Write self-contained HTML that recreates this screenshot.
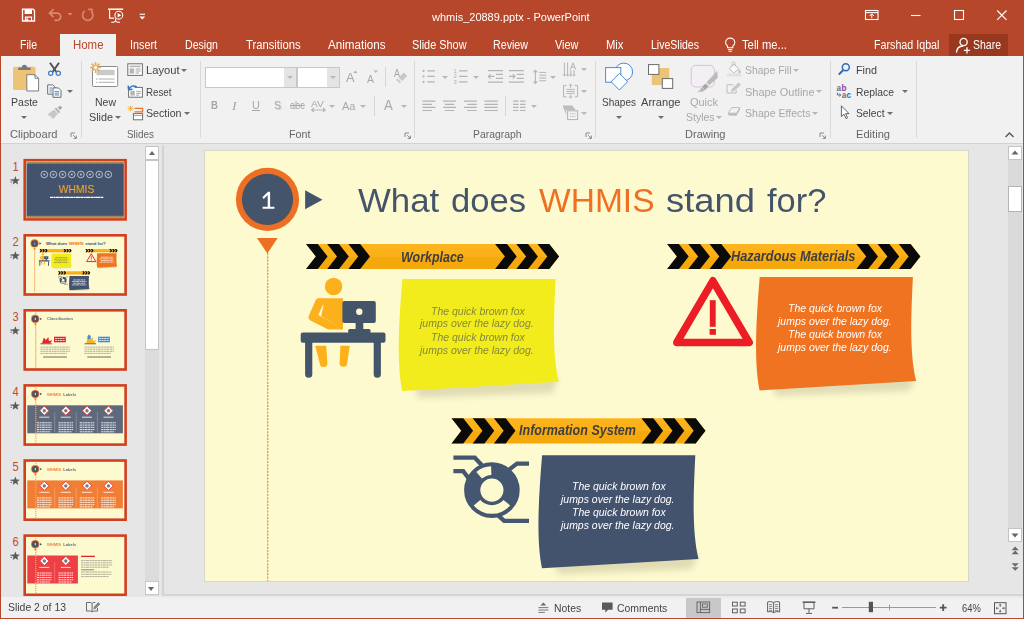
<!DOCTYPE html>
<html>
<head>
<meta charset="utf-8">
<title>whmis_20889.pptx - PowerPoint</title>
<style>
*{box-sizing:border-box;margin:0;padding:0}
html,body{width:1024px;height:619px;overflow:hidden;background:#e6e6e6;font-family:"Liberation Sans",sans-serif;}
#app{position:relative;width:1024px;height:619px;overflow:hidden;background:#e6e6e6;}
.abs{position:absolute}
svg{position:absolute;overflow:visible}
.t{position:absolute;white-space:nowrap;line-height:1}
#titlebar{left:0;top:0;width:1024px;height:56px;background:#b7472a}
#hometab{left:60px;top:34px;width:56px;height:23px;background:#f1f1f1}
#ribbon{left:1px;top:56px;width:1022px;height:88px;background:#f1f1f1;border-bottom:1px solid #d2d2d2}
.sep{position:absolute;top:61px;width:1px;height:77px;background:#dadada}
.ssep{position:absolute;width:1px;background:#d6d6d6}
.arr{position:absolute;width:0;height:0;border-left:3px solid transparent;border-right:3px solid transparent;border-top:3px solid #6e6e6e}
.arr.dis{border-top-color:#b8b8b8}
.arr.w{border-top-color:#fff}
#status{left:1px;top:597px;width:1022px;height:21px;background:#f1f1f1}
.frame{position:absolute;background:#b7472a}
</style>
</head>
<body>
<div id="app">
<div id="titlebar" class="abs"></div>
<div id="hometab" class="abs"></div>
<div id="ribbon" class="abs"></div>
<!-- QAT -->
<svg style="left:0;top:0" width="160" height="32" viewBox="0 0 160 32" fill="none">
 <!-- save -->
 <path d="M22.5 9.2h10.6l1.4 1.4v10.4h-12z" stroke="#fff" stroke-width="1.3"/>
 <rect x="24.6" y="9.2" width="7.4" height="4.8" fill="#fff"/>
 <path d="M25.5 21v-3.8h6v3.8" stroke="#fff" stroke-width="1.2"/>
 <rect x="26.4" y="18.4" width="1.8" height="2.6" fill="#fff"/>
 <!-- undo -->
 <g stroke="#d58c76" stroke-width="1.700">
  <path d="M49.5 13.2h7.2a4 3.6 0 0 1 0 7.2h-2.2"/>
  <path d="M53.6 9.2l-4.1 4 4.1 4"/>
 </g>
 <path d="M67.600 12.900h5l-2.500 2.700z" fill="#d58c76"/>
 <!-- redo -->
 <g stroke="#d3866f" stroke-width="1.700">
  <path d="M91.5 11.5a5.2 5.2 0 1 1 -6.8 -0.6"/>
  <path d="M88.2 9.3h3.7v3.9"/>
 </g>
 <!-- slideshow from beginning -->
 <g stroke="#fff" stroke-width="1.1">
  <path d="M108 9.2h15.2" stroke-width="1.5"/>
  <path d="M109.6 9.5v8.6h4.6"/>
  <circle cx="118.8" cy="15.2" r="3.9"/>
  <path d="M115.6 18.4v3.2M111.2 22.3h2.6l1.8-1.2 1.8 1.2h2.6"/>
 </g>
 <path d="M117.6 13l3.6 2.2-3.6 2.2z" fill="#fff"/>
 <!-- customize -->
 <rect x="139.6" y="13.7" width="5.4" height="1.1" fill="#fff"/>
 <path d="M139.4 16.4h5.8l-2.9 3.1z" fill="#fff"/>
</svg>
<!-- window controls -->
<svg style="left:860px;top:0" width="164" height="32" viewBox="860 0 164 32" fill="none" stroke="#fff" stroke-width="1.1">
 <rect x="865.5" y="10.5" width="12.5" height="9"/>
 <path d="M865.5 12.6h12.5"/>
 <path d="M871.8 18.2v-4.2M869.6 16l2.2-2.2 2.2 2.2" stroke-width="1"/>
 <path d="M911 15.5h9.5"/>
 <rect x="954.5" y="10.5" width="9" height="9"/>
 <path d="M997.2 10.5l9.3 9.3M1006.5 10.5l-9.3 9.3" stroke-width="1.15"/>
</svg>
<!-- share button + bulb -->
<div class="abs" style="left:949px;top:34px;width:59px;height:22px;background:#98391f"></div>
<svg style="left:720px;top:32px" width="304" height="24" viewBox="720 32 304 24" fill="none" stroke="#fff" stroke-width="1.1">
 <path d="M727.6 46.2c-1.7-1.4-2-2.6-2-3.7a4.6 4.4 0 0 1 9.2 0c0 1.1-.3 2.3-2 3.7v1.6h-5.2z"/>
 <path d="M728 49.6h4.4M728.6 51.3h3.2" stroke-width="1"/>
 <!-- person + -->
 <circle cx="963.6" cy="42" r="3.6" stroke-width="1.3"/>
 <path d="M956.4 52.6c.4-4.2 3.2-6.6 6.6-6.6" stroke-width="1.3"/>
 <path d="M967 47.2v6.2M963.9 50.3h6.2" stroke-width="1.3"/>
</svg>
<!-- ribbon separators -->
<div class="sep" style="left:81px"></div>
<div class="sep" style="left:200px"></div>
<div class="sep" style="left:414px"></div>
<div class="sep" style="left:595px"></div>
<div class="sep" style="left:830px"></div>
<div class="sep" style="left:916px"></div>
<div class="ssep" style="left:385px;top:67px;height:20px"></div>
<div class="ssep" style="left:374px;top:96px;height:20px"></div>
<div class="ssep" style="left:505px;top:96px;height:20px"></div>
<!-- font combos -->
<div class="abs" style="left:205px;top:67px;width:92px;height:21px;background:#fff;border:1px solid #c8c8c8"></div>
<div class="abs" style="left:284px;top:68px;width:12px;height:19px;background:#e4e4e4"></div>
<div class="abs" style="left:297px;top:67px;width:43px;height:21px;background:#fff;border:1px solid #c8c8c8"></div>
<div class="abs" style="left:327px;top:68px;width:12px;height:19px;background:#e4e4e4"></div>
<div class="arr dis" style="left:287px;top:76px"></div>
<div class="arr dis" style="left:330px;top:76px"></div>
<!-- dropdown arrows -->
<div class="arr" style="left:21px;top:115.5px"></div>
<div class="arr" style="left:67px;top:89.5px"></div>
<div class="arr" style="left:115px;top:115.5px"></div>
<div class="arr" style="left:181px;top:68.5px"></div>
<div class="arr" style="left:184px;top:111.5px"></div>
<div class="arr dis" style="left:329px;top:105px"></div>
<div class="arr dis" style="left:359.5px;top:105px"></div>
<div class="arr dis" style="left:401px;top:105px"></div>
<div class="arr dis" style="left:441.5px;top:76px"></div>
<div class="arr dis" style="left:473px;top:76px"></div>
<div class="arr dis" style="left:550px;top:76px"></div>
<div class="arr dis" style="left:531px;top:105px"></div>
<div class="arr dis" style="left:581px;top:68px"></div>
<div class="arr dis" style="left:581px;top:90px"></div>
<div class="arr dis" style="left:581px;top:112px"></div>
<div class="arr" style="left:616px;top:115.5px"></div>
<div class="arr" style="left:658px;top:115.5px"></div>
<div class="arr dis" style="left:716px;top:115.5px"></div>
<div class="arr dis" style="left:793px;top:68.5px"></div>
<div class="arr dis" style="left:816px;top:90px"></div>
<div class="arr dis" style="left:812px;top:111.5px"></div>
<div class="arr" style="left:902px;top:90px"></div>
<div class="arr" style="left:886.5px;top:111.5px"></div>
<!-- dialog launchers + collapse -->
<svg style="left:0;top:56px" width="1024" height="88" viewBox="0 56 1024 88" fill="none" stroke="#8a8a8a" stroke-width="1">
 <g id="dl"><path d="M71 137v-4h4"/><path d="M73.2 135.2l3 3M76.4 135.6v2.8h-2.8"/></g>
 <use href="#dl" x="334"/><use href="#dl" x="515"/><use href="#dl" x="749"/>
 <path d="M1005.5 137l4-4 4 4" stroke="#555" stroke-width="1.4"/>
</svg>
<!-- clipboard + slides icons -->
<svg style="left:0;top:56px" width="210" height="88" viewBox="0 56 210 88" fill="none">
 <!-- paste -->
 <rect x="13" y="66.7" width="22.5" height="23.2" rx="1.5" fill="#edc375"/>
 <path d="M18.2 70v-2.6h3.6a2.6 2.6 0 0 1 5.2 0h3.6v2.6z" fill="#7a7a7a"/>
 <path d="M26.8 74.7h8.2l3.6 3.6v12.7h-11.8z" fill="#fff" stroke="#7d7d7d" stroke-width="1"/>
 <path d="M35 74.7v3.6h3.6" stroke="#7d7d7d" stroke-width="1"/>
 <!-- cut -->
 <path d="M50 62.8l6.6 9.4M59 62.8l-6.6 9.4" stroke="#505050" stroke-width="1.900"/>
 <circle cx="50.7" cy="73.3" r="2.1" stroke="#3b7cc2" stroke-width="1.2"/>
 <circle cx="58.3" cy="73.3" r="2.1" stroke="#3b7cc2" stroke-width="1.2"/>
 <!-- copy -->
 <path d="M47.7 84.9h5l2.3 2.3v7h-7.3z" fill="#fff" stroke="#6a6a6a" stroke-width="1"/>
 <path d="M53 87.9h5.4l2.6 2.6v6.8h-8z" fill="#fff" stroke="#6a6a6a" stroke-width="1"/>
 <path d="M49.4 88h3M49.4 90h2.4M49.4 92h2.4M54.6 91.4h4.6M54.6 93.2h4.6M54.6 95h4.6" stroke="#3b7cc2" stroke-width="0.9"/>
 <!-- format painter (disabled) -->
 <path d="M47.6 114.4l6.4-5 4 4.4-5 5.2-2-2.3z" fill="#c9c6c9"/>
 <path d="M54.6 108.6l1.6-1.2 4 4.5-1.6 1.3z" fill="#b4b0b4"/>
 <path d="M57.6 107.4l3-1.6 1.6 1.8-2 2.4z" fill="#a7a3a7"/>
 <!-- new slide -->
 <rect x="92.5" y="66.5" width="25.2" height="20" rx="1" fill="#fff" stroke="#8b8b8b" stroke-width="1"/>
 <rect x="96.6" y="69.8" width="18" height="5.4" fill="#c9c9c9"/>
 <path d="M98.8 79h15.8M98.8 82.3h15.8" stroke="#9a9a9a" stroke-width="0.8"/>
 <path d="M96.2 79h1.2M96.2 82.3h1.2" stroke="#8a8a8a" stroke-width="0.9"/>
 <g stroke="#efb245" stroke-width="1.6"><path d="M95.6 62v11M90.1 67.5h11M91.7 63.6l7.8 7.8M99.5 63.6l-7.8 7.8"/></g>
 <circle cx="95.6" cy="67.5" r="1.7" fill="#f1f1f1"/>
 <!-- layout -->
 <rect x="127.8" y="63.8" width="14.6" height="11.6" fill="#fff" stroke="#6f6f6f" stroke-width="1"/>
 <rect x="129.6" y="65.6" width="11" height="1.6" fill="#b5b5b5"/>
 <rect x="129.6" y="68.4" width="4.6" height="5.2" fill="#b5b5b5"/>
 <path d="M135.6 69h5M135.6 71h5M135.6 73h3.4" stroke="#8d8d8d" stroke-width="0.8"/>
 <!-- reset -->
 <rect x="128.6" y="87.4" width="13.8" height="9.8" fill="#fff" stroke="#6f6f6f" stroke-width="1"/>
 <rect x="130.4" y="90.8" width="4.4" height="4.8" fill="#b5b5b5"/>
 <path d="M136.2 91.4h4.6M136.2 93.4h4.6M136.2 95.2h3" stroke="#8d8d8d" stroke-width="0.8"/>
 <rect x="126.6" y="84" width="8" height="5.2" fill="#f1f1f1"/>
 <path d="M128.6 89.8l-.4-4.2M128.4 89.8l4-.6M128.8 89.3c1.5-3.4 5-4.3 8-2.2" stroke="#2f75bf" stroke-width="1.5"/>
 <!-- section -->
 <rect x="133.4" y="113.6" width="9.2" height="6.2" fill="#fff" stroke="#6f6f6f" stroke-width="1"/>
 <path d="M133.4 115.6h9.2" stroke="#8d8d8d" stroke-width="0.8"/>
 <path d="M134.6 108.4h8v3.4h-8" stroke="#e8762d" stroke-width="1.3"/>
 <g stroke="#efb245" stroke-width="0.9"><path d="M130.6 105.4v6M127.6 108.4h6M128.5 106.3l4.2 4.2M132.7 106.3l-4.2 4.2"/></g>
</svg>
<!-- font + paragraph icons (disabled) -->
<svg style="left:200px;top:56px" width="400" height="88" viewBox="200 56 400 88" fill="none" stroke="#b4b4b4" stroke-width="1.2">
 <!-- grow/shrink triangles -->
 <path d="M353.2 73l2.2-2.6 2.2 2.6z" fill="#b4b4b4" stroke="none"/>
 <path d="M373.6 70.5h4.4l-2.2 2.6z" fill="#b4b4b4" stroke="none"/>
 <!-- clear formatting eraser -->
 <path d="M398.8 77.4l4.900-4.900 3.500 3.500-4.900 4.900z" fill="#c8c8c8" stroke="none"/>
 <path d="M397.500 78.500l3.500 3.500-1.300 1.300-3.500-3.500z" fill="#c8c8c8" stroke="none"/>
 <!-- AV double arrow -->
 <path d="M311.6 110h13.6M313.8 108l-2.2 2 2.2 2M323 108l2.2 2-2.2 2" stroke-width="1.1"/>
 <!-- bullets -->
 <path d="M427.2 70.9h7.6M427.2 76.4h7.6M427.2 81.9h7.6"/>
 <g fill="#b4b4b4" stroke="none"><circle cx="423.5" cy="70.9" r="1.1"/><circle cx="423.5" cy="76.4" r="1.1"/><circle cx="423.5" cy="81.9" r="1.1"/></g>
 <!-- numbering -->
 <path d="M459.2 70.9h8.2M459.2 76.4h8.2M459.2 81.9h8.2"/>
 <g font-family="Liberation Sans" font-size="5.2" fill="#aaa" stroke="none"><text x="453.8" y="72.6">1</text><text x="453.8" y="78.2">2</text><text x="453.8" y="83.8">3</text></g>
 <!-- decrease indent -->
 <path d="M488 70.6h15M488 82.2h15M496 74.4h7M496 78.4h7"/>
 <path d="M488.4 76.4h6M490.6 74.2l-2.2 2.2 2.2 2.2" stroke-width="1.1"/>
 <!-- increase indent -->
 <path d="M508.8 70.6h15M508.8 82.2h15M516.8 74.4h7M516.8 78.4h7"/>
 <path d="M509 76.4h6M512.8 74.2l2.2 2.2-2.2 2.2" stroke-width="1.1"/>
 <!-- line spacing -->
 <path d="M539.2 72.4h7M539.2 75.2h7M539.2 78h7M539.2 80.8h7" stroke-width="1"/>
 <path d="M535.4 70.4v13M533.4 72.4l2-2 2 2M533.4 81.4l2 2 2-2" stroke-width="1.1"/>
 <!-- text direction -->
 <path d="M564.4 62.6v13.4M567.6 62.6v13.4M570.8 70v6M574 70v6" stroke-width="1"/>
 <path d="M563 74.4l1.4 1.8 1.4-1.8M566.2 74.4l1.4 1.8 1.4-1.8M569.4 74.4l1.4 1.8 1.4-1.8M572.6 74.4l1.4 1.8 1.4-1.8" stroke-width="0.8"/>
 <path d="M570.4 69.4l2.6-6.6 2.6 6.6M571.3 67.2h3.4" stroke-width="1"/>
 <!-- align text -->
 <path d="M566.4 85.4h-2.8v11.4h2.8M574.8 85.4h2.8v11.4h-2.8" stroke="#b9adb9" stroke-width="1"/>
 <path d="M566.4 89.4h8.4M566.4 91.4h8.4M566.4 93.4h8.4" stroke-width="0.9"/>
 <path d="M570.6 84v4M569 85.8l1.6-1.8 1.6 1.8M570.6 98v-3.6M569 96.4l1.6 1.8 1.6-1.8" stroke-width="0.9"/>
 <!-- smartart -->
 <path d="M562.6 105.4h9.6l3.4 4.6h-9.4v5z" fill="#bdbdbd" stroke="none"/>
 <rect x="567.6" y="110.8" width="10" height="8.8" fill="#f6f0f6" stroke="#b9adb9" stroke-width="1"/>
 <path d="M570 113.6h5.4M570 116.4h5.4" stroke-width="0.9" stroke-dasharray="1.4 0.8"/>
 <!-- align left/center/right/justify -->
 <path d="M422.4 101.2h13M422.4 104.3h9.6M422.4 107.4h13M422.4 110.5h9.6"/>
 <path d="M443 101.2h13M444.8 104.3h9.4M443 107.4h13M444.8 110.5h9.4"/>
 <path d="M463.8 101.2h13M467.2 104.3h9.6M463.8 107.4h13M467.2 110.5h9.6"/>
 <path d="M484.4 101.2h13.4M484.4 104.3h13.4M484.4 107.4h13.4M484.4 110.5h13.4"/>
 <!-- columns -->
 <path d="M513 101.2h5.6M520 101.2h5.6M513 104.3h5.6M520 104.3h5.6M513 107.4h5.6M520 107.4h5.6M513 110.5h5.6M520 110.5h5.6"/>
</svg>
<!-- drawing + editing icons -->
<svg style="left:596px;top:56px" width="330" height="88" viewBox="596 56 330 88" fill="none">
 <!-- shapes -->
 <circle cx="623.8" cy="71.9" r="8.8" fill="#fff" stroke="#4a8ad0" stroke-width="1"/>
 <rect x="605.6" y="67.6" width="15.2" height="14.6" fill="#fff" stroke="#4a8ad0" stroke-width="1"/>
 <path d="M619.4 73.4l8.2 8.3-8.2 8.3-8.2-8.3z" fill="#fff" stroke="#4a8ad0" stroke-width="1"/>
 <!-- arrange -->
 <rect x="651.8" y="68" width="17.4" height="17" fill="#edc375"/>
 <rect x="648.5" y="64.6" width="10.4" height="9.8" fill="#fff" stroke="#6b6b6b" stroke-width="1"/>
 <rect x="662.3" y="78.6" width="10.4" height="9.8" fill="#fff" stroke="#6b6b6b" stroke-width="1"/>
 <!-- quick styles -->
 <rect x="691.2" y="65.4" width="23.2" height="21.6" rx="4.5" fill="#f4eff4" stroke="#cfc8cf" stroke-width="1"/>
 <path d="M697.2 91.6c2.2-.4 3.2-1.8 3.8-3.8l4.6 1.2c-1.4 2.4-4.2 3.4-8.4 2.6z" fill="#b9b6b9"/>
 <path d="M702 87l3.4-3.6 3 2.6-2.6 3.8z" fill="#a9a6a9"/>
 <path d="M706.4 82.4l10.8-11.6.6 7-8.6 7.4z" fill="#bdbabd"/>
 <!-- shape fill -->
 <path d="M729 68.6l5-4.4 4.8 4.6-5 4.2z" fill="#fbfbfb" stroke="#bdbdbd" stroke-width="1"/>
 <path d="M732 66.6v-3.2a1.5 1.5 0 0 1 3 0v2.6" stroke="#bdbdbd" stroke-width="0.9"/>
 <path d="M739.4 69.2c.9 1.2 1.5 2.1 1.5 2.8a1.4 1.3 0 0 1-2.8 0c0-.7.5-1.6 1.300-2.8z" fill="#c4c4c4"/>
 <rect x="727" y="73.6" width="14.2" height="2.8" fill="#e4dfe4"/>
 <!-- shape outline -->
 <path d="M733.4 84.8h-6.400v8.200h9.200v-3" stroke="#bdbdbd" stroke-width="1"/>
 <path d="M731.6 91.400l.8-2.600 6.200-5.800 1.800 1.800-6.200 5.800z" fill="#c9c9c9" stroke="#b5b5b5" stroke-width="0.6"/>
 <!-- shape effects -->
 <path d="M728.200 113.200l3.600-5.600h8l-3.200 5.600z" fill="#f5f1f5" stroke="#c2bcc2" stroke-width="1"/>
 <path d="M728.200 113.400v1.800l8.200.6 3.600-6.400v-1.600l-3.400 5.800z" fill="#b9b6b9"/>
 <!-- find -->
 <circle cx="845.8" cy="67.2" r="3.500" stroke="#2b6cb8" stroke-width="1.5"/>
 <path d="M843.200 70l-4.400 4.600" stroke="#2b6cb8" stroke-width="2"/>
 <!-- replace -->
 <g font-family="Liberation Sans" font-size="8.2" font-weight="bold">
  <text x="836.6" y="91.400" fill="#6e6e6e">a</text><text x="841.400" y="91.400" fill="#8c3fa8">b</text>
  <text x="841.800" y="97.600" fill="#6e6e6e">a</text><text x="846.600" y="97.600" fill="#2b6cb8">c</text>
 </g>
 <path d="M837.400 92.600v2.400h3.200M839.200 93.600l1.600 1.400-1.600 1.400" stroke="#2b6cb8" stroke-width="0.9"/>
 <!-- select -->
 <path d="M841.400 105.800v10.800l2.600-2.400 2 4.400 1.600-.8-2-4.200h3.400z" fill="#fff" stroke="#555" stroke-width="0.9"/>
</svg>
<!-- thumbnail panel -->
<svg style="left:0;top:144px" width="165" height="453" viewBox="0 144 165 453" fill="none">
<defs><clipPath id="pc"><rect x="0" y="144" width="165" height="452.6"/></clipPath></defs><g clip-path="url(#pc)">
<text x="12.6" y="170.7" font-family="Liberation Sans" font-size="13.5" fill="#c9472a" textLength="6.2" lengthAdjust="spacingAndGlyphs">1</text>
<path d="M15.40 176.10L16.56 179.20L19.87 179.35L17.28 181.41L18.16 184.60L15.40 182.77L12.64 184.60L13.52 181.41L10.93 179.35L14.24 179.20z" fill="#5a5a5a"/>
<path d="M10.2 179.8l2 .5M10.4 182.2l1.8-.3" stroke="#5a5a5a" stroke-width="0.8"/>
<rect x="23.4" y="158.9" width="103.5" height="61.8" fill="#d0401c"/>
<rect x="26.0" y="161.5" width="98.3" height="56.599999999999994" fill="#fdf3e6"/>
<text x="12.6" y="245.8" font-family="Liberation Sans" font-size="13.5" fill="#c9472a" textLength="6.2" lengthAdjust="spacingAndGlyphs">2</text>
<path d="M15.40 251.20L16.56 254.30L19.87 254.45L17.28 256.51L18.16 259.70L15.40 257.87L12.64 259.70L13.52 256.51L10.93 254.45L14.24 254.30z" fill="#5a5a5a"/>
<path d="M10.2 254.9l2 .5M10.4 257.3l1.8-.3" stroke="#5a5a5a" stroke-width="0.8"/>
<rect x="23.4" y="234.0" width="103.5" height="61.8" fill="#d0401c"/>
<rect x="26.0" y="236.6" width="98.3" height="56.599999999999994" fill="#fdf3e6"/>
<text x="12.6" y="320.8" font-family="Liberation Sans" font-size="13.5" fill="#c9472a" textLength="6.2" lengthAdjust="spacingAndGlyphs">3</text>
<path d="M15.40 326.20L16.56 329.30L19.87 329.45L17.28 331.51L18.16 334.70L15.40 332.87L12.64 334.70L13.52 331.51L10.93 329.45L14.24 329.30z" fill="#5a5a5a"/>
<path d="M10.2 329.9l2 .5M10.4 332.3l1.8-.3" stroke="#5a5a5a" stroke-width="0.8"/>
<rect x="23.4" y="309.0" width="103.5" height="61.8" fill="#d0401c"/>
<rect x="26.0" y="311.6" width="98.3" height="56.599999999999994" fill="#fdf3e6"/>
<text x="12.6" y="395.9" font-family="Liberation Sans" font-size="13.5" fill="#c9472a" textLength="6.2" lengthAdjust="spacingAndGlyphs">4</text>
<path d="M15.40 401.30L16.56 404.40L19.87 404.55L17.28 406.61L18.16 409.80L15.40 407.97L12.64 409.80L13.52 406.61L10.93 404.55L14.24 404.40z" fill="#5a5a5a"/>
<path d="M10.2 405.0l2 .5M10.4 407.4l1.8-.3" stroke="#5a5a5a" stroke-width="0.8"/>
<rect x="23.4" y="384.1" width="103.5" height="61.8" fill="#d0401c"/>
<rect x="26.0" y="386.70000000000005" width="98.3" height="56.599999999999994" fill="#fdf3e6"/>
<text x="12.6" y="471.0" font-family="Liberation Sans" font-size="13.5" fill="#c9472a" textLength="6.2" lengthAdjust="spacingAndGlyphs">5</text>
<path d="M15.40 476.40L16.56 479.50L19.87 479.65L17.28 481.71L18.16 484.90L15.40 483.07L12.64 484.90L13.52 481.71L10.93 479.65L14.24 479.50z" fill="#5a5a5a"/>
<path d="M10.2 480.1l2 .5M10.4 482.5l1.8-.3" stroke="#5a5a5a" stroke-width="0.8"/>
<rect x="23.4" y="459.2" width="103.5" height="61.8" fill="#d0401c"/>
<rect x="26.0" y="461.8" width="98.3" height="56.599999999999994" fill="#fdf3e6"/>
<text x="12.6" y="546.1" font-family="Liberation Sans" font-size="13.5" fill="#c9472a" textLength="6.2" lengthAdjust="spacingAndGlyphs">6</text>
<path d="M15.40 551.50L16.56 554.60L19.87 554.75L17.28 556.81L18.16 560.00L15.40 558.17L12.64 560.00L13.52 556.81L10.93 554.75L14.24 554.60z" fill="#5a5a5a"/>
<path d="M10.2 555.2l2 .5M10.4 557.6l1.8-.3" stroke="#5a5a5a" stroke-width="0.8"/>
<rect x="23.4" y="534.3" width="103.5" height="61.8" fill="#d0401c"/>
<rect x="26.0" y="536.9" width="98.3" height="56.599999999999994" fill="#fdf3e6"/>
<rect x="26.5" y="162.0" width="97.3" height="55.599999999999994" fill="#43526d"/>
<path d="M26.5 162.9h97.3M26.5 216.7h97.3" stroke="#e2b02a" stroke-width="1.7" stroke-dasharray="1.2 0.8"/>
<circle cx="44.3" cy="174.5" r="3.3" stroke="#e9ecf0" stroke-width="0.7"/><circle cx="44.3" cy="174.5" r="1.1" fill="#d5dae2" opacity="0.8"/>
<circle cx="53.4" cy="174.5" r="3.3" stroke="#e9ecf0" stroke-width="0.7"/><circle cx="53.4" cy="174.5" r="1.1" fill="#d5dae2" opacity="0.8"/>
<circle cx="62.6" cy="174.5" r="3.3" stroke="#e9ecf0" stroke-width="0.7"/><circle cx="62.6" cy="174.5" r="1.1" fill="#d5dae2" opacity="0.8"/>
<circle cx="71.8" cy="174.5" r="3.3" stroke="#e9ecf0" stroke-width="0.7"/><circle cx="71.8" cy="174.5" r="1.1" fill="#d5dae2" opacity="0.8"/>
<circle cx="80.9" cy="174.5" r="3.3" stroke="#e9ecf0" stroke-width="0.7"/><circle cx="80.9" cy="174.5" r="1.1" fill="#d5dae2" opacity="0.8"/>
<circle cx="90.0" cy="174.5" r="3.3" stroke="#e9ecf0" stroke-width="0.7"/><circle cx="90.0" cy="174.5" r="1.1" fill="#d5dae2" opacity="0.8"/>
<circle cx="99.2" cy="174.5" r="3.3" stroke="#e9ecf0" stroke-width="0.7"/><circle cx="99.2" cy="174.5" r="1.1" fill="#d5dae2" opacity="0.8"/>
<circle cx="108.3" cy="174.5" r="3.3" stroke="#e9ecf0" stroke-width="0.7"/><circle cx="108.3" cy="174.5" r="1.1" fill="#d5dae2" opacity="0.8"/>
<text x="58.5" y="193.2" font-family="Liberation Sans" font-size="11" fill="#f4a62a" textLength="35.6" lengthAdjust="spacingAndGlyphs">WHMIS</text>
<path d="M50.0 197.4h53.3" stroke="#fff" stroke-width="1.3" stroke-dasharray="3 0.4 2 0.3 4 0.4"/>
<rect x="26.5" y="237.1" width="97.3" height="55.599999999999994" fill="#fefad0"/>
<path d="M34.65 250.29999999999998V292.7" stroke="#f3a566" stroke-width="1" stroke-dasharray="1.3 0.7"/>
<g transform="translate(26.5 237.1) scale(0.12719) translate(-204 -150)"><use href="#sc"/>
<g font-family="Liberation Sans" font-size="33" font-weight="bold"><text x="358" y="212" fill="#44546a" textLength="168" lengthAdjust="spacingAndGlyphs">What does</text><text x="538" y="212" fill="#ee7023" textLength="116" lengthAdjust="spacingAndGlyphs">WHMIS</text><text x="666" y="212" fill="#44546a" textLength="160" lengthAdjust="spacingAndGlyphs">stand for?</text></g>
<path d="M431 311H524" stroke="#8b9040" stroke-width="5.5" stroke-dasharray="22 4 30 4 16 4"/>
<path d="M420 324H533" stroke="#8b9040" stroke-width="5.5" stroke-dasharray="22 4 30 4 16 4"/>
<path d="M431 337H524" stroke="#8b9040" stroke-width="5.5" stroke-dasharray="22 4 30 4 16 4"/>
<path d="M420 350H533" stroke="#8b9040" stroke-width="5.5" stroke-dasharray="22 4 30 4 16 4"/>
<path d="M789 308H882" stroke="#fff" stroke-width="5.5" stroke-dasharray="22 4 30 4 16 4"/>
<path d="M778 321H891" stroke="#fff" stroke-width="5.5" stroke-dasharray="22 4 30 4 16 4"/>
<path d="M789 334H882" stroke="#fff" stroke-width="5.5" stroke-dasharray="22 4 30 4 16 4"/>
<path d="M778 347H891" stroke="#fff" stroke-width="5.5" stroke-dasharray="22 4 30 4 16 4"/>
<path d="M572 487H666" stroke="#fff" stroke-width="5.5" stroke-dasharray="22 4 30 4 16 4"/>
<path d="M561 500H675" stroke="#fff" stroke-width="5.5" stroke-dasharray="22 4 30 4 16 4"/>
<path d="M572 513H666" stroke="#fff" stroke-width="5.5" stroke-dasharray="22 4 30 4 16 4"/>
<path d="M561 526H675" stroke="#fff" stroke-width="5.5" stroke-dasharray="22 4 30 4 16 4"/>
</g>
<rect x="26.5" y="312.1" width="97.3" height="55.599999999999994" fill="#fefad0"/>
<path d="M35.8 312.6V367.70000000000005" stroke="#f3a566" stroke-width="1.1" stroke-dasharray="1.3 0.7"/><circle cx="35.2" cy="318.90000000000003" r="4.1" fill="#ed6f23"/><circle cx="35.2" cy="318.90000000000003" r="3.2" fill="#44546b"/><rect x="34.8" y="317.70000000000005" width="0.9" height="2.4" fill="#fff"/><path d="M39.9 317.70000000000005l2.2 1.2-2.2 1.2z" fill="#44546b"/><path d="M33.9 323.40000000000003h2.7l-1.35 2z" fill="#ed6f23"/><text x="46.9" y="320.4" font-family="Liberation Sans" font-size="4.2" font-weight="bold" fill="#44546a" textLength="26" lengthAdjust="spacingAndGlyphs" opacity="0.85">Classification</text>
<path d="M41.9 343.40000000000003l2-6 2 2.5 2.5-3 .5 4 3.5-.6-2.5 3.2z" fill="#e8232d"/>
<path d="M40.4 343.8h11.6" stroke="#5a6470" stroke-width="1"/>
<rect x="54.0" y="336.70000000000005" width="11.8" height="5.6" fill="#e8232d"/>
<path d="M55.0 338.5h9.8M55.0 340.5h9.800" stroke="#fdf0e8" stroke-width="0.8" stroke-dasharray="2 0.5"/>
<path d="M40.4 347.1h29.4" stroke="#7f7f74" stroke-width="0.65" opacity="0.95" stroke-dasharray="2.3 0.5 1.7 0.4 3 0.5"/><path d="M40.4 349.2h29.4" stroke="#7f7f74" stroke-width="0.65" opacity="0.95" stroke-dasharray="2.3 0.5 1.7 0.4 3 0.5"/><path d="M40.4 351.3h29.4" stroke="#7f7f74" stroke-width="0.65" opacity="0.95" stroke-dasharray="2.3 0.5 1.7 0.4 3 0.5"/><path d="M40.4 353.4h26.5" stroke="#7f7f74" stroke-width="0.65" opacity="0.95" stroke-dasharray="2.3 0.5 1.7 0.4 3 0.5"/>
<path d="M43.199999999999996 357.0h23.700" stroke="#44484e" stroke-width="0.8"/>
<path d="M86.0 343.40000000000003l2-6 2 2.5 2.5-3 .5 4 3.5-.6-2.5 3.2z" fill="#f3b51f"/>
<path d="M89.1 334.5l1.6 1.4v3.4h-3.2v-3.4z" fill="#3f8fd6"/>
<path d="M84.5 343.8h11.6" stroke="#5a6470" stroke-width="1"/>
<rect x="98.1" y="336.70000000000005" width="11.8" height="5.6" fill="#3f8fd6"/>
<path d="M99.1 338.5h9.8M99.1 340.5h9.800" stroke="#fdf0e8" stroke-width="0.8" stroke-dasharray="2 0.5"/>
<path d="M84.5 347.1h29.4" stroke="#7f7f74" stroke-width="0.65" opacity="0.95" stroke-dasharray="2.3 0.5 1.7 0.4 3 0.5"/><path d="M84.5 349.2h29.4" stroke="#7f7f74" stroke-width="0.65" opacity="0.95" stroke-dasharray="2.3 0.5 1.7 0.4 3 0.5"/><path d="M84.5 351.3h29.4" stroke="#7f7f74" stroke-width="0.65" opacity="0.95" stroke-dasharray="2.3 0.5 1.7 0.4 3 0.5"/><path d="M84.5 353.4h26.5" stroke="#7f7f74" stroke-width="0.65" opacity="0.95" stroke-dasharray="2.3 0.5 1.7 0.4 3 0.5"/>
<path d="M87.3 357.0h23.700" stroke="#44484e" stroke-width="0.8"/>
<rect x="26.5" y="387.20000000000005" width="97.3" height="55.599999999999994" fill="#fefad0"/><rect x="27.3" y="405.30000000000007" width="95.6" height="28" fill="#5e6a7b"/><path d="M35.8 387.70000000000005V442.80000000000007" stroke="#f3a566" stroke-width="1.1" stroke-dasharray="1.3 0.7"/><circle cx="35.2" cy="394.00000000000006" r="4.1" fill="#ed6f23"/><circle cx="35.2" cy="394.00000000000006" r="3.2" fill="#44546b"/><rect x="34.8" y="392.80000000000007" width="0.9" height="2.4" fill="#fff"/><path d="M39.9 392.80000000000007l2.2 1.2-2.2 1.2z" fill="#44546b"/><path d="M33.9 398.50000000000006h2.7l-1.35 2z" fill="#ed6f23"/><text x="46.9" y="395.5" font-family="Liberation Sans" font-size="4.2" font-weight="bold" fill="#ee7023" textLength="14.2" lengthAdjust="spacingAndGlyphs" opacity="0.85">WHMIS</text><text x="63.3" y="395.5" font-family="Liberation Sans" font-size="4.2" font-weight="bold" fill="#44546a" textLength="13" lengthAdjust="spacingAndGlyphs" opacity="0.85">Labels</text><path d="M44.3 406.1l4.600 4.600-4.600 4.600-4.600-4.600z" fill="#fff" stroke="#ec3138" stroke-width="0.9"/><circle cx="44.3" cy="410.80000000000007" r="1.700" fill="#4a4a4a" opacity="0.75"/><path d="M39.3 417.20000000000005h10" stroke="#fff" stroke-width="0.9" opacity="0.9"/><path d="M37.0 422.8h14.6" stroke="#fff" stroke-width="0.9" opacity="0.95" stroke-dasharray="2.3 0.5 1.7 0.4 3 0.5"/><path d="M37.0 425.1h14.6" stroke="#fff" stroke-width="0.9" opacity="0.95" stroke-dasharray="2.3 0.5 1.7 0.4 3 0.5"/><path d="M37.0 427.3h14.6" stroke="#fff" stroke-width="0.9" opacity="0.95" stroke-dasharray="2.3 0.5 1.7 0.4 3 0.5"/><path d="M37.0 429.6h14.6" stroke="#fff" stroke-width="0.9" opacity="0.95" stroke-dasharray="2.3 0.5 1.7 0.4 3 0.5"/><path d="M37.0 431.8h13.1" stroke="#fff" stroke-width="0.9" opacity="0.95" stroke-dasharray="2.3 0.5 1.7 0.4 3 0.5"/><path d="M54.699999999999996 412.20000000000005v20" stroke="#fff" stroke-width="0.5" opacity="0.45"/><path d="M65.8 406.1l4.600 4.600-4.600 4.600-4.600-4.600z" fill="#fff" stroke="#ec3138" stroke-width="0.9"/><circle cx="65.8" cy="410.80000000000007" r="1.700" fill="#4a4a4a" opacity="0.75"/><path d="M60.8 417.20000000000005h10" stroke="#fff" stroke-width="0.9" opacity="0.9"/><path d="M58.5 422.8h14.6" stroke="#fff" stroke-width="0.9" opacity="0.95" stroke-dasharray="2.3 0.5 1.7 0.4 3 0.5"/><path d="M58.5 425.1h14.6" stroke="#fff" stroke-width="0.9" opacity="0.95" stroke-dasharray="2.3 0.5 1.7 0.4 3 0.5"/><path d="M58.5 427.3h14.6" stroke="#fff" stroke-width="0.9" opacity="0.95" stroke-dasharray="2.3 0.5 1.7 0.4 3 0.5"/><path d="M58.5 429.6h14.6" stroke="#fff" stroke-width="0.9" opacity="0.95" stroke-dasharray="2.3 0.5 1.7 0.4 3 0.5"/><path d="M58.5 431.8h13.1" stroke="#fff" stroke-width="0.9" opacity="0.95" stroke-dasharray="2.3 0.5 1.7 0.4 3 0.5"/><path d="M76.2 412.20000000000005v20" stroke="#fff" stroke-width="0.5" opacity="0.45"/><path d="M87.0 406.1l4.600 4.600-4.600 4.600-4.600-4.600z" fill="#fff" stroke="#ec3138" stroke-width="0.9"/><circle cx="87.0" cy="410.80000000000007" r="1.700" fill="#4a4a4a" opacity="0.75"/><path d="M82.0 417.20000000000005h10" stroke="#fff" stroke-width="0.9" opacity="0.9"/><path d="M79.7 422.8h14.6" stroke="#fff" stroke-width="0.9" opacity="0.95" stroke-dasharray="2.3 0.5 1.7 0.4 3 0.5"/><path d="M79.7 425.1h14.6" stroke="#fff" stroke-width="0.9" opacity="0.95" stroke-dasharray="2.3 0.5 1.7 0.4 3 0.5"/><path d="M79.7 427.3h14.6" stroke="#fff" stroke-width="0.9" opacity="0.95" stroke-dasharray="2.3 0.5 1.7 0.4 3 0.5"/><path d="M79.7 429.6h14.6" stroke="#fff" stroke-width="0.9" opacity="0.95" stroke-dasharray="2.3 0.5 1.7 0.4 3 0.5"/><path d="M79.7 431.8h13.1" stroke="#fff" stroke-width="0.9" opacity="0.95" stroke-dasharray="2.3 0.5 1.7 0.4 3 0.5"/><path d="M97.4 412.20000000000005v20" stroke="#fff" stroke-width="0.5" opacity="0.45"/><path d="M108.5 406.1l4.600 4.600-4.600 4.600-4.600-4.600z" fill="#fff" stroke="#ec3138" stroke-width="0.9"/><circle cx="108.5" cy="410.80000000000007" r="1.700" fill="#4a4a4a" opacity="0.75"/><path d="M103.5 417.20000000000005h10" stroke="#fff" stroke-width="0.9" opacity="0.9"/><path d="M101.2 422.8h14.6" stroke="#fff" stroke-width="0.9" opacity="0.95" stroke-dasharray="2.3 0.5 1.7 0.4 3 0.5"/><path d="M101.2 425.1h14.6" stroke="#fff" stroke-width="0.9" opacity="0.95" stroke-dasharray="2.3 0.5 1.7 0.4 3 0.5"/><path d="M101.2 427.3h14.6" stroke="#fff" stroke-width="0.9" opacity="0.95" stroke-dasharray="2.3 0.5 1.7 0.4 3 0.5"/><path d="M101.2 429.6h14.6" stroke="#fff" stroke-width="0.9" opacity="0.95" stroke-dasharray="2.3 0.5 1.7 0.4 3 0.5"/><path d="M101.2 431.8h13.1" stroke="#fff" stroke-width="0.9" opacity="0.95" stroke-dasharray="2.3 0.5 1.7 0.4 3 0.5"/>
<rect x="26.5" y="462.3" width="97.3" height="55.599999999999994" fill="#fefad0"/><rect x="27.3" y="480.40000000000003" width="95.6" height="28" fill="#f07f35"/><path d="M35.8 462.8V517.9" stroke="#f3a566" stroke-width="1.1" stroke-dasharray="1.3 0.7"/><circle cx="35.2" cy="469.1" r="4.1" fill="#ed6f23"/><circle cx="35.2" cy="469.1" r="3.2" fill="#44546b"/><rect x="34.8" y="467.90000000000003" width="0.9" height="2.4" fill="#fff"/><path d="M39.9 467.90000000000003l2.2 1.2-2.2 1.2z" fill="#44546b"/><path d="M33.9 473.6h2.7l-1.35 2z" fill="#ed6f23"/><text x="46.9" y="470.6" font-family="Liberation Sans" font-size="4.2" font-weight="bold" fill="#ee7023" textLength="14.2" lengthAdjust="spacingAndGlyphs" opacity="0.85">WHMIS</text><text x="63.3" y="470.6" font-family="Liberation Sans" font-size="4.2" font-weight="bold" fill="#44546a" textLength="13" lengthAdjust="spacingAndGlyphs" opacity="0.85">Labels</text><path d="M44.3 481.2l4.600 4.600-4.600 4.600-4.600-4.600z" fill="#fff" stroke="#ec3138" stroke-width="0.9"/><circle cx="44.3" cy="485.90000000000003" r="1.700" fill="#4a4a4a" opacity="0.75"/><path d="M39.3 492.3h10" stroke="#fff" stroke-width="0.9" opacity="0.9"/><path d="M37.0 497.9h14.6" stroke="#fff" stroke-width="0.9" opacity="0.95" stroke-dasharray="2.3 0.5 1.7 0.4 3 0.5"/><path d="M37.0 500.2h14.6" stroke="#fff" stroke-width="0.9" opacity="0.95" stroke-dasharray="2.3 0.5 1.7 0.4 3 0.5"/><path d="M37.0 502.4h14.6" stroke="#fff" stroke-width="0.9" opacity="0.95" stroke-dasharray="2.3 0.5 1.7 0.4 3 0.5"/><path d="M37.0 504.7h14.6" stroke="#fff" stroke-width="0.9" opacity="0.95" stroke-dasharray="2.3 0.5 1.7 0.4 3 0.5"/><path d="M37.0 506.9h13.1" stroke="#fff" stroke-width="0.9" opacity="0.95" stroke-dasharray="2.3 0.5 1.7 0.4 3 0.5"/><path d="M54.699999999999996 487.3v20" stroke="#fff" stroke-width="0.5" opacity="0.45"/><path d="M65.8 481.2l4.600 4.600-4.600 4.600-4.600-4.600z" fill="#fff" stroke="#ec3138" stroke-width="0.9"/><circle cx="65.8" cy="485.90000000000003" r="1.700" fill="#4a4a4a" opacity="0.75"/><path d="M60.8 492.3h10" stroke="#fff" stroke-width="0.9" opacity="0.9"/><path d="M58.5 497.9h14.6" stroke="#fff" stroke-width="0.9" opacity="0.95" stroke-dasharray="2.3 0.5 1.7 0.4 3 0.5"/><path d="M58.5 500.2h14.6" stroke="#fff" stroke-width="0.9" opacity="0.95" stroke-dasharray="2.3 0.5 1.7 0.4 3 0.5"/><path d="M58.5 502.4h14.6" stroke="#fff" stroke-width="0.9" opacity="0.95" stroke-dasharray="2.3 0.5 1.7 0.4 3 0.5"/><path d="M58.5 504.7h14.6" stroke="#fff" stroke-width="0.9" opacity="0.95" stroke-dasharray="2.3 0.5 1.7 0.4 3 0.5"/><path d="M58.5 506.9h13.1" stroke="#fff" stroke-width="0.9" opacity="0.95" stroke-dasharray="2.3 0.5 1.7 0.4 3 0.5"/><path d="M76.2 487.3v20" stroke="#fff" stroke-width="0.5" opacity="0.45"/><path d="M87.0 481.2l4.600 4.600-4.600 4.600-4.600-4.600z" fill="#fff" stroke="#ec3138" stroke-width="0.9"/><circle cx="87.0" cy="485.90000000000003" r="1.700" fill="#4a4a4a" opacity="0.75"/><path d="M82.0 492.3h10" stroke="#fff" stroke-width="0.9" opacity="0.9"/><path d="M79.7 497.9h14.6" stroke="#fff" stroke-width="0.9" opacity="0.95" stroke-dasharray="2.3 0.5 1.7 0.4 3 0.5"/><path d="M79.7 500.2h14.6" stroke="#fff" stroke-width="0.9" opacity="0.95" stroke-dasharray="2.3 0.5 1.7 0.4 3 0.5"/><path d="M79.7 502.4h14.6" stroke="#fff" stroke-width="0.9" opacity="0.95" stroke-dasharray="2.3 0.5 1.7 0.4 3 0.5"/><path d="M79.7 504.7h14.6" stroke="#fff" stroke-width="0.9" opacity="0.95" stroke-dasharray="2.3 0.5 1.7 0.4 3 0.5"/><path d="M79.7 506.9h13.1" stroke="#fff" stroke-width="0.9" opacity="0.95" stroke-dasharray="2.3 0.5 1.7 0.4 3 0.5"/><path d="M97.4 487.3v20" stroke="#fff" stroke-width="0.5" opacity="0.45"/><path d="M108.5 481.2l4.600 4.600-4.600 4.600-4.600-4.600z" fill="#fff" stroke="#ec3138" stroke-width="0.9"/><circle cx="108.5" cy="485.90000000000003" r="1.700" fill="#4a4a4a" opacity="0.75"/><path d="M103.5 492.3h10" stroke="#fff" stroke-width="0.9" opacity="0.9"/><path d="M101.2 497.9h14.6" stroke="#fff" stroke-width="0.9" opacity="0.95" stroke-dasharray="2.3 0.5 1.7 0.4 3 0.5"/><path d="M101.2 500.2h14.6" stroke="#fff" stroke-width="0.9" opacity="0.95" stroke-dasharray="2.3 0.5 1.7 0.4 3 0.5"/><path d="M101.2 502.4h14.6" stroke="#fff" stroke-width="0.9" opacity="0.95" stroke-dasharray="2.3 0.5 1.7 0.4 3 0.5"/><path d="M101.2 504.7h14.6" stroke="#fff" stroke-width="0.9" opacity="0.95" stroke-dasharray="2.3 0.5 1.7 0.4 3 0.5"/><path d="M101.2 506.9h13.1" stroke="#fff" stroke-width="0.9" opacity="0.95" stroke-dasharray="2.3 0.5 1.7 0.4 3 0.5"/>
<rect x="26.5" y="537.4" width="97.3" height="55.599999999999994" fill="#fefad0"/><rect x="27.3" y="555.5" width="50.6" height="28" fill="#ee3f45"/><path d="M35.8 537.9V593.0" stroke="#f3a566" stroke-width="1.1" stroke-dasharray="1.3 0.7"/><circle cx="35.2" cy="544.1999999999999" r="4.1" fill="#ed6f23"/><circle cx="35.2" cy="544.1999999999999" r="3.2" fill="#44546b"/><rect x="34.8" y="543.0" width="0.9" height="2.4" fill="#fff"/><path d="M39.9 543.0l2.2 1.2-2.2 1.2z" fill="#44546b"/><path d="M33.9 548.6999999999999h2.7l-1.35 2z" fill="#ed6f23"/><text x="46.9" y="545.7" font-family="Liberation Sans" font-size="4.2" font-weight="bold" fill="#ee7023" textLength="14.2" lengthAdjust="spacingAndGlyphs" opacity="0.85">WHMIS</text><text x="63.3" y="545.7" font-family="Liberation Sans" font-size="4.2" font-weight="bold" fill="#44546a" textLength="13" lengthAdjust="spacingAndGlyphs" opacity="0.85">Labels</text><path d="M44.3 556.3l4.600 4.600-4.600 4.600-4.600-4.600z" fill="#fff" stroke="#ec3138" stroke-width="0.9"/><circle cx="44.3" cy="561.0" r="1.700" fill="#4a4a4a" opacity="0.75"/><path d="M39.3 567.4h10" stroke="#fff" stroke-width="0.9" opacity="0.9"/><path d="M37.0 573.0h14.6" stroke="#fff" stroke-width="0.9" opacity="0.95" stroke-dasharray="2.3 0.5 1.7 0.4 3 0.5"/><path d="M37.0 575.2h14.6" stroke="#fff" stroke-width="0.9" opacity="0.95" stroke-dasharray="2.3 0.5 1.7 0.4 3 0.5"/><path d="M37.0 577.5h14.6" stroke="#fff" stroke-width="0.9" opacity="0.95" stroke-dasharray="2.3 0.5 1.7 0.4 3 0.5"/><path d="M37.0 579.8h14.6" stroke="#fff" stroke-width="0.9" opacity="0.95" stroke-dasharray="2.3 0.5 1.7 0.4 3 0.5"/><path d="M37.0 582.0h13.1" stroke="#fff" stroke-width="0.9" opacity="0.95" stroke-dasharray="2.3 0.5 1.7 0.4 3 0.5"/><path d="M54.699999999999996 562.4v20" stroke="#fff" stroke-width="0.5" opacity="0.45"/><path d="M65.8 556.3l4.600 4.600-4.600 4.600-4.600-4.600z" fill="#fff" stroke="#ec3138" stroke-width="0.9"/><circle cx="65.8" cy="561.0" r="1.700" fill="#4a4a4a" opacity="0.75"/><path d="M60.8 567.4h10" stroke="#fff" stroke-width="0.9" opacity="0.9"/><path d="M58.5 573.0h14.6" stroke="#fff" stroke-width="0.9" opacity="0.95" stroke-dasharray="2.3 0.5 1.7 0.4 3 0.5"/><path d="M58.5 575.2h14.6" stroke="#fff" stroke-width="0.9" opacity="0.95" stroke-dasharray="2.3 0.5 1.7 0.4 3 0.5"/><path d="M58.5 577.5h14.6" stroke="#fff" stroke-width="0.9" opacity="0.95" stroke-dasharray="2.3 0.5 1.7 0.4 3 0.5"/><path d="M58.5 579.8h14.6" stroke="#fff" stroke-width="0.9" opacity="0.95" stroke-dasharray="2.3 0.5 1.7 0.4 3 0.5"/><path d="M58.5 582.0h13.1" stroke="#fff" stroke-width="0.9" opacity="0.95" stroke-dasharray="2.3 0.5 1.7 0.4 3 0.5"/>
<path d="M81.100 556.3h13.800" stroke="#e3202a" stroke-width="1.300"/>
<path d="M81.1 560.6h31.0" stroke="#7a7a70" stroke-width="0.65" opacity="0.95" stroke-dasharray="2.3 0.5 1.7 0.4 3 0.5"/><path d="M81.1 562.8h31.0" stroke="#7a7a70" stroke-width="0.65" opacity="0.95" stroke-dasharray="2.3 0.5 1.7 0.4 3 0.5"/><path d="M81.1 565.0h31.0" stroke="#7a7a70" stroke-width="0.65" opacity="0.95" stroke-dasharray="2.3 0.5 1.7 0.4 3 0.5"/><path d="M81.1 567.2h27.9" stroke="#7a7a70" stroke-width="0.65" opacity="0.95" stroke-dasharray="2.3 0.5 1.7 0.4 3 0.5"/>
<path d="M81.100 569.8h13" stroke="#55554c" stroke-width="0.700"/>
<path d="M81.1 572.0h30.5" stroke="#7a7a70" stroke-width="0.65" opacity="0.95" stroke-dasharray="2.3 0.5 1.7 0.4 3 0.5"/><path d="M81.1 574.3h30.5" stroke="#7a7a70" stroke-width="0.65" opacity="0.95" stroke-dasharray="2.3 0.5 1.7 0.4 3 0.5"/><path d="M81.1 576.6h27.4" stroke="#7a7a70" stroke-width="0.65" opacity="0.95" stroke-dasharray="2.3 0.5 1.7 0.4 3 0.5"/>
</g></svg>
<div class="abs" style="left:145px;top:146px;width:13.500px;height:449.500px;background:#dcdcdc"></div>
<div class="abs" style="left:145px;top:146px;width:14px;height:14px;background:#fff;border:1px solid #c4c4c4"></div>
<div class="abs" style="left:145px;top:160px;width:14px;height:190px;background:#fff;border:1px solid #c4c4c4"></div>
<div class="abs" style="left:144.500px;top:581.300px;width:14.200px;height:14.200px;background:#fff;border:1px solid #c9c9c9"></div>
<div class="abs" style="left:148.500px;top:151px;width:0;height:0;border-left:3.500px solid transparent;border-right:3.500px solid transparent;border-bottom:4px solid #666"></div>
<div class="abs" style="left:148px;top:587px;width:0;height:0;border-left:3.600px solid transparent;border-right:3.600px solid transparent;border-top:4.100px solid #666"></div>
<div class="abs" style="left:162px;top:145px;width:1.500px;height:450.500px;background:#d3d3d3"></div>
<!-- slide -->
<div class="abs" style="left:204px;top:150px;width:765px;height:432px;background:#fefad0;box-shadow:inset 0 0 0 1px #d9d8c8"></div>
<svg style="left:204px;top:150px" width="765" height="431" viewBox="204 150 765 431" fill="none">
<defs><linearGradient id="bg" x1="0" y1="0" x2="0" y2="1"><stop offset="0" stop-color="#fdb41e"/><stop offset="0.5" stop-color="#fcb017"/><stop offset="0.53" stop-color="#f6a90d"/><stop offset="1" stop-color="#f5a80c"/></linearGradient>
<filter id="blur" x="-20%" y="-50%" width="140%" height="200%"><feGaussianBlur stdDeviation="3.2"/></filter></defs>
<g id="sc">
<path d="M267.7 253V581" stroke="#f0924e" stroke-width="1.3" stroke-dasharray="2.2 1.1"/>
<circle cx="267.5" cy="199.4" r="31.6" fill="#ed6f23"/><circle cx="267.5" cy="199.4" r="25.6" fill="#44546b"/>
<path d="M262.4 197.2l5.600-5.400h2.100v15h4.300v1.900h-11.800v-1.900h5.100v-11.700l-4 3.800z" fill="#fff"/>
<path d="M305.100 190.300l17.400 9.500-17.400 9.500z" fill="#44546b"/>
<path d="M257 238h20.700l-10.350 15.600z" fill="#ed6f23"/>
<path d="M306 243.9L549.3000000000001 243.9L559.1 256.45L549.3000000000001 269L306 269L315.8 256.45z" fill="url(#bg)"/><path d="M306.0 243.9L317.8 243.9L327.6 256.45L317.8 269L306.0 269L315.8 256.45z" fill="#0a0a0a"/><path d="M327.2 243.9L339.0 243.9L348.8 256.45L339.0 269L327.2 269L337.0 256.45z" fill="#0a0a0a"/><path d="M348.4 243.9L360.2 243.9L370.0 256.45L360.2 269L348.4 269L358.2 256.45z" fill="#0a0a0a"/><path d="M537.5 243.9L549.3 243.9L559.1 256.45L549.3 269L537.5 269L547.3 256.45z" fill="#0a0a0a"/><path d="M516.3 243.9L528.1 243.9L537.9 256.45L528.1 269L516.3 269L526.1 256.45z" fill="#0a0a0a"/><path d="M495.1 243.9L506.9 243.9L516.7 256.45L506.9 269L495.1 269L504.9 256.45z" fill="#0a0a0a"/>
<path d="M667.1 243.9L910.6 243.9L920.4 256.45L910.6 269L667.1 269L676.9 256.45z" fill="url(#bg)"/><path d="M667.1 243.9L678.9 243.9L688.7 256.45L678.9 269L667.1 269L676.9 256.45z" fill="#0a0a0a"/><path d="M688.3 243.9L700.1 243.9L709.9 256.45L700.1 269L688.3 269L698.1 256.45z" fill="#0a0a0a"/><path d="M709.5 243.9L721.3 243.9L731.1 256.45L721.3 269L709.5 269L719.3 256.45z" fill="#0a0a0a"/><path d="M898.8 243.9L910.6 243.9L920.4 256.45L910.6 269L898.8 269L908.6 256.45z" fill="#0a0a0a"/><path d="M877.6 243.9L889.4 243.9L899.2 256.45L889.4 269L877.6 269L887.4 256.45z" fill="#0a0a0a"/><path d="M856.4 243.9L868.2 243.9L878.0 256.45L868.2 269L856.4 269L866.2 256.45z" fill="#0a0a0a"/>
<path d="M451.5 418.2L695.7 418.2L705.5 430.79999999999995L695.7 443.4L451.5 443.4L461.3 430.79999999999995z" fill="url(#bg)"/><path d="M451.5 418.2L463.3 418.2L473.1 430.79999999999995L463.3 443.4L451.5 443.4L461.3 430.79999999999995z" fill="#0a0a0a"/><path d="M472.7 418.2L484.5 418.2L494.3 430.79999999999995L484.5 443.4L472.7 443.4L482.5 430.79999999999995z" fill="#0a0a0a"/><path d="M493.9 418.2L505.7 418.2L515.5 430.79999999999995L505.7 443.4L493.9 443.4L503.7 430.79999999999995z" fill="#0a0a0a"/><path d="M683.9 418.2L695.7 418.2L705.5 430.79999999999995L695.7 443.4L683.9 443.4L693.7 430.79999999999995z" fill="#0a0a0a"/><path d="M662.7 418.2L674.5 418.2L684.3 430.79999999999995L674.5 443.4L662.7 443.4L672.5 430.79999999999995z" fill="#0a0a0a"/><path d="M641.5 418.2L653.3 418.2L663.1 430.79999999999995L653.3 443.4L641.5 443.4L651.3 430.79999999999995z" fill="#0a0a0a"/>
<g fill="#fcb01c"><circle cx="333.600" cy="286.500" r="8.700"/>
<path d="M320.500 298.200h22.500v31.300h-11.300l1.400-6.800-11.900-6.400 2.300-10.500z"/>
<path d="M319.400 302.200l-6.600 14.800 16.800 8.400" stroke="#fcb01c" stroke-width="8.400" stroke-linecap="round" stroke-linejoin="round" fill="none"/>
<path d="M315.200 345.700h11l1.200 17.400a3.800 3.800 0 0 1-7.600.4z"/><path d="M340.400 345.700h9.400l-2.600 17.600a3.800 3.800 0 0 1-7.600-.6z"/></g>
<g fill="#445569"><rect x="342.400" y="301" width="33.400" height="21.900" rx="2"/><rect x="355.600" y="322" width="7.700" height="8"/><rect x="348.200" y="329" width="22.300" height="4.500" rx="1.500"/>
<rect x="300.700" y="332.500" width="84.800" height="10.200" rx="2"/><rect x="305.100" y="338" width="7.200" height="39.800" rx="3.600"/><rect x="373.700" y="338" width="7.200" height="39.800" rx="3.600"/></g>
<circle cx="359.300" cy="311.700" r="3.200" fill="#fefad0"/>
<path d="M712.900 280.800L749.200 342.500H676.800z" stroke="#ec1d25" stroke-width="7.500" stroke-linejoin="round"/>
<rect x="709.800" y="300.200" width="5.900" height="26.600" fill="#ec1d25"/><rect x="709.600" y="329" width="6.300" height="5.800" fill="#ec1d25"/>
<g stroke="#455670" stroke-width="4.300"><path d="M453.400 457.600h21.300l7.200 7.600M453.400 471.200h9.800l5.400 7M529 463.600h-12l-7.600 5.800M529 520.900h-24.800l-6.400-5.800"/></g>
<circle cx="491.900" cy="490.100" r="19.700" stroke="#455670" stroke-width="16.200"/>
<path d="M476.3 472.1A23.8 23.8 0 0 1 491.1 466.3L491.4 474.9A15.2 15.2 0 0 0 481.9 478.6z" fill="#fefad0"/>
<path d="M510.1 505.4A23.8 23.8 0 0 1 473.7 505.4L480.3 499.9A15.2 15.2 0 0 0 503.5 499.9z" fill="#fefad0"/>
<path d="M412.4 378.9L558.4 376.9L552.4 392.9L418.4 397.9z" fill="#8a8560" opacity="0.26" filter="url(#blur)"/><path d="M402.4 278.9L555.6 278.9C553.9 313.9 551.9 353.9 558.8 381.8L402.3 391.1C396.6 363.9 398.6 323.9 402.4 278.9z" fill="#f3ec1c"/>
<path d="M769.7 377L915.7 375L909.7 391L775.7 396z" fill="#8a8560" opacity="0.26" filter="url(#blur)"/><path d="M759.7 277L912.9 277C911.2 312.4 909.2 352.9 916.1 381.1L759.6 390.5C753.9 363.0 755.9 322.5 759.7 277z" fill="#ef7320"/>
<path d="M552.1 555.2L698.1 553.2L692.1 569.2L558.1 574.2z" fill="#8a8560" opacity="0.26" filter="url(#blur)"/><path d="M542.1 455.2L695.3 455.2C693.6 490.5 691.6 530.8 698.5 558.9L542.0 568.3C536.3 540.9 538.3 500.6 542.1 455.2z" fill="#43526d"/>
</g>
</svg>
<!-- right scrollbar -->
<div class="abs" style="left:1008px;top:146px;width:14px;height:396px;background:#dadada"></div>
<div class="abs" style="left:1008px;top:146px;width:14px;height:14px;background:#fff;border:1px solid #c4c4c4"></div>
<div class="abs" style="left:1008px;top:186px;width:14px;height:26px;background:#fff;border:1px solid #b4b4b4"></div>
<div class="abs" style="left:1008px;top:528px;width:14px;height:14px;background:#fff;border:1px solid #c4c4c4"></div>
<svg style="left:1004px;top:144px" width="20" height="440" viewBox="1004 144 20 440" fill="#666">
 <path d="M1011.500 154.600l3.500-4 3.500 4z"/>
 <path d="M1011.500 533.400h7l-3.500 4z"/>
 <path d="M1011.600 550.200l3.600-3.600 3.600 3.600zM1011.600 554.200l3.600-3.600 3.600 3.600z" fill="#6a6a6a"/>
 <path d="M1011.600 563.200l3.600 3.600 3.600-3.600zM1011.600 567.200l3.600 3.600 3.600-3.600z" fill="#6a6a6a"/>
</svg>
<!-- horizontal divider above status bar -->
<div class="abs" style="left:163px;top:594px;width:860px;height:2px;background:#d5d5d5"></div>
<!-- status bar -->
<div id="status" class="abs"></div>
<div class="abs" style="left:163px;top:596px;width:860px;height:2px;background:#ebebeb"></div>
<div class="abs" style="left:686px;top:598px;width:35px;height:20px;background:#c8c8c8"></div>
<svg style="left:0;top:597px" width="1024" height="22" viewBox="0 597 1024 22" fill="none" stroke="#5f5f5f" stroke-width="1">
 <!-- spell/notes-check icon -->
 <path d="M86.500 602.500h4.200l1.400 1v8.500l-1.400-1h-4.200zM92.100 603.500l1.400-1h1.800M92.100 612l1.400-1h4v-3" stroke="#6a6a6a"/>
 <path d="M93.800 608.800l.6-2 4-4.200 1.400 1.400-4 4.200z" fill="#8a8a8a" stroke="#6a6a6a" stroke-width="0.700"/>
 <!-- notes -->
 <path d="M540.400 605.600l3-3.200 3 3.200z" fill="#6a6a6a" stroke="none"/>
 <path d="M538.400 607.600h10M538.400 610h10M538.400 612.400h6.500" stroke="#7a7a7a"/>
 <!-- comments -->
 <path d="M602 602.400h10.600v7.400h-4.600l-2.600 3v-3h-3.400z" fill="#5a5a5a" stroke="none"/>
 <!-- normal view -->
 <rect x="697" y="602" width="12.600" height="10.600" stroke="#666"/>
 <path d="M700.400 602v10.600M700.400 609.400h9.200" stroke="#666"/>
 <rect x="702.400" y="604" width="5" height="3.200" stroke="#666" stroke-width="0.900"/>
 <!-- sorter -->
 <rect x="732.500" y="602.200" width="4.800" height="3.800"/><rect x="740.300" y="602.200" width="4.800" height="3.800"/>
 <rect x="732.500" y="609" width="4.800" height="3.800"/><rect x="740.300" y="609" width="4.800" height="3.800"/>
 <!-- reading view -->
 <path d="M773.600 602.600v10.200M773.600 602.600c-2-1.200-4-1.200-6-.6v10c2-.6 4-.6 6 .6M773.600 602.600c2-1.200 4-1.200 6-.6v10c-2-.6-4-.6-6 .6"/>
 <path d="M769 604.600h3.200M769 606.600h3.200M769 608.600h3.200M769 610.600h3.200M775 604.600h3.200M775 606.600h3.200M775 608.600h3.200M775 610.600h3.200" stroke-width="0.700"/>
 <!-- slideshow -->
 <path d="M802.600 602.200h12.800" stroke-width="1.600"/>
 <path d="M804 603v5.800h10v-5.800M809 608.800v4M806 613.400h6"/>
 <!-- zoom -->
 <path d="M832.200 607.700h5.800" stroke="#555" stroke-width="1.800"/>
 <path d="M842 607.500h94" stroke="#9a9a9a"/>
 <path d="M889.500 604.600v5.800" stroke="#9a9a9a"/>
 <rect x="868.800" y="601.800" width="4.200" height="10.400" fill="#555" stroke="none"/>
 <path d="M939.800 607.700h6.800M943.200 604.300v6.800" stroke="#555" stroke-width="1.800"/>
 <!-- fit -->
 <rect x="994.500" y="602.700" width="11.500" height="11" stroke="#555"/>
 <path d="M1000.200 604.200v2.600M1000.200 612.200v-2.600M996 608.200h2.600M1004.600 608.200h-2.600" stroke="#555" stroke-width="0.900"/>
 <path d="M999.200 605.400l1-1.200 1 1.200M999.200 611l1 1.200 1-1.200M997.200 607.200l-1.200 1 1.200 1M1003.400 607.200l1.200 1-1.200 1" stroke="#555" stroke-width="0.700"/>
</svg>
<!-- labels -->
<div class="t" style="left:432.0px;top:12.2px;font-size:11.8px;color:#fff;transform-origin:0 0;transform:scaleX(0.932);">whmis_20889.pptx - PowerPoint</div>
<div class="t" style="left:20.0px;top:39.3px;font-size:12px;color:#fff;transform-origin:0 0;transform:scaleX(0.879);">File</div>
<div class="t" style="left:72.5px;top:38.8px;font-size:12px;color:#b7472a;transform-origin:0 0;transform:scaleX(0.953);">Home</div>
<div class="t" style="left:130.0px;top:38.8px;font-size:12px;color:#fff;transform-origin:0 0;transform:scaleX(0.900);">Insert</div>
<div class="t" style="left:185.0px;top:38.8px;font-size:12px;color:#fff;transform-origin:0 0;transform:scaleX(0.883);">Design</div>
<div class="t" style="left:246.0px;top:38.8px;font-size:12px;color:#fff;transform-origin:0 0;transform:scaleX(0.936);">Transitions</div>
<div class="t" style="left:327.5px;top:38.8px;font-size:12px;color:#fff;transform-origin:0 0;transform:scaleX(0.968);">Animations</div>
<div class="t" style="left:411.5px;top:38.8px;font-size:12px;color:#fff;transform-origin:0 0;transform:scaleX(0.908);">Slide Show</div>
<div class="t" style="left:492.5px;top:38.8px;font-size:12px;color:#fff;transform-origin:0 0;transform:scaleX(0.889);">Review</div>
<div class="t" style="left:554.5px;top:38.8px;font-size:12px;color:#fff;transform-origin:0 0;transform:scaleX(0.911);">View</div>
<div class="t" style="left:605.5px;top:38.8px;font-size:12px;color:#fff;transform-origin:0 0;transform:scaleX(0.937);">Mix</div>
<div class="t" style="left:650.5px;top:38.8px;font-size:12px;color:#fff;transform-origin:0 0;transform:scaleX(0.877);">LiveSlides</div>
<div class="t" style="left:742.0px;top:38.8px;font-size:12px;color:#fff;transform-origin:0 0;transform:scaleX(0.937);">Tell me...</div>
<div class="t" style="left:874.0px;top:38.8px;font-size:12px;color:#fff;transform-origin:0 0;transform:scaleX(0.892);">Farshad Iqbal</div>
<div class="t" style="left:973.0px;top:38.8px;font-size:12px;color:#fff;transform-origin:0 0;transform:scaleX(0.874);">Share</div>
<div class="t" style="left:11.0px;top:96.2px;font-size:11.6px;color:#444;transform-origin:0 0;transform:scaleX(0.910);">Paste</div>
<div class="t" style="left:9.5px;top:129.2px;font-size:11.2px;color:#666;transform-origin:0 0;transform:scaleX(0.992);">Clipboard</div>
<div class="t" style="left:94.5px;top:96.2px;font-size:11.6px;color:#444;transform-origin:0 0;transform:scaleX(0.905);">New</div>
<div class="t" style="left:89.0px;top:110.7px;font-size:11.6px;color:#444;transform-origin:0 0;transform:scaleX(0.931);">Slide</div>
<div class="t" style="left:145.5px;top:64.2px;font-size:11.6px;color:#444;transform-origin:0 0;transform:scaleX(0.962);">Layout</div>
<div class="t" style="left:145.5px;top:85.7px;font-size:11.6px;color:#444;transform-origin:0 0;transform:scaleX(0.842);">Reset</div>
<div class="t" style="left:145.5px;top:107.4px;font-size:11.6px;color:#444;transform-origin:0 0;transform:scaleX(0.918);">Section</div>
<div class="t" style="left:127.0px;top:129.2px;font-size:11.2px;color:#666;transform-origin:0 0;transform:scaleX(0.886);">Slides</div>
<div class="t" style="left:289.0px;top:129.2px;font-size:11.2px;color:#666;transform-origin:0 0;transform:scaleX(0.960);">Font</div>
<div class="t" style="left:472.5px;top:129.2px;font-size:11.2px;color:#666;transform-origin:0 0;transform:scaleX(0.928);">Paragraph</div>
<div class="t" style="left:602.0px;top:96.2px;font-size:11.6px;color:#444;transform-origin:0 0;transform:scaleX(0.865);">Shapes</div>
<div class="t" style="left:641.0px;top:96.2px;font-size:11.6px;color:#444;transform-origin:0 0;transform:scaleX(0.958);">Arrange</div>
<div class="t" style="left:689.5px;top:96.2px;font-size:11.6px;color:#a8a8a8;transform-origin:0 0;transform:scaleX(0.945);">Quick</div>
<div class="t" style="left:685.5px;top:110.7px;font-size:11.6px;color:#a8a8a8;transform-origin:0 0;transform:scaleX(0.903);">Styles</div>
<div class="t" style="left:744.5px;top:64.2px;font-size:11.6px;color:#a8a8a8;transform-origin:0 0;transform:scaleX(0.902);">Shape Fill</div>
<div class="t" style="left:744.5px;top:85.7px;font-size:11.6px;color:#a8a8a8;transform-origin:0 0;transform:scaleX(0.946);">Shape Outline</div>
<div class="t" style="left:744.5px;top:107.4px;font-size:11.6px;color:#a8a8a8;transform-origin:0 0;transform:scaleX(0.910);">Shape Effects</div>
<div class="t" style="left:684.5px;top:129.2px;font-size:11.2px;color:#666;transform-origin:0 0;transform:scaleX(0.987);">Drawing</div>
<div class="t" style="left:855.5px;top:64.2px;font-size:11.6px;color:#444;transform-origin:0 0;transform:scaleX(0.931);">Find</div>
<div class="t" style="left:855.5px;top:85.7px;font-size:11.6px;color:#444;transform-origin:0 0;transform:scaleX(0.893);">Replace</div>
<div class="t" style="left:855.5px;top:107.4px;font-size:11.6px;color:#444;transform-origin:0 0;transform:scaleX(0.884);">Select</div>
<div class="t" style="left:856.0px;top:129.2px;font-size:11.2px;color:#666;transform-origin:0 0;transform:scaleX(0.994);">Editing</div>
<div class="t" style="left:210.8px;top:100.1px;font-size:11.5px;color:#a8a8a8;transform-origin:0 0;transform:scaleX(0.830);font-weight:bold">B</div>
<div class="t" style="left:232.3px;top:99.6px;font-size:12px;color:#a8a8a8;transform-origin:0 0;transform:scaleX(1.150);font-style:italic;font-family:'Liberation Serif',serif">I</div>
<div class="t" style="left:251.9px;top:100.1px;font-size:11.5px;color:#a8a8a8;transform-origin:0 0;transform:scaleX(0.950);text-decoration:underline">U</div>
<div class="t" style="left:273.5px;top:99.8px;font-size:11.8px;color:#a8a8a8;transform-origin:0 0;transform:scaleX(0.902);text-shadow:1px 1px 1px #ccc">S</div>
<div class="t" style="left:290.4px;top:100.1px;font-size:11.4px;color:#a8a8a8;transform-origin:0 0;transform:scaleX(0.805);text-decoration:line-through">abc</div>
<div class="t" style="left:311.3px;top:98.7px;font-size:9.6px;color:#a8a8a8;transform-origin:0 0;transform:scaleX(1.075);">AV</div>
<div class="t" style="left:342.0px;top:100.2px;font-size:11.6px;color:#a8a8a8;transform-origin:0 0;transform:scaleX(0.952);">Aa</div>
<div class="t" style="left:384.3px;top:98.8px;font-size:13.8px;color:#a8a8a8;transform-origin:0 0;transform:scaleX(0.956);">A</div>
<div class="t" style="left:345.7px;top:71.3px;font-size:13.4px;color:#a8a8a8;transform-origin:0 0;transform:scaleX(0.962);">A</div>
<div class="t" style="left:367.1px;top:73.7px;font-size:10.5px;color:#a8a8a8;transform-origin:0 0;transform:scaleX(0.998);">A</div>
<div class="t" style="left:394.0px;top:69.1px;font-size:10.2px;color:#a8a8a8;transform-origin:0 0;transform:scaleX(0.883);">A</div>
<div class="t" style="left:8.0px;top:602.3px;font-size:10.8px;color:#444;transform-origin:0 0;transform:scaleX(0.966);">Slide 2 of 13</div>
<div class="t" style="left:554.3px;top:602.5px;font-size:10.8px;color:#444;transform-origin:0 0;transform:scaleX(0.964);">Notes</div>
<div class="t" style="left:617.0px;top:602.5px;font-size:10.8px;color:#444;transform-origin:0 0;transform:scaleX(0.964);">Comments</div>
<div class="t" style="left:961.6px;top:602.6px;font-size:10.8px;color:#444;transform-origin:0 0;transform:scaleX(0.869);">64%</div>
<div class="t" style="left:357.8px;top:184.1px;font-size:33px;color:#44546a;transform-origin:0 0;transform:scaleX(1.055);">What</div>
<div class="t" style="left:451.3px;top:184.1px;font-size:33px;color:#44546a;transform-origin:0 0;transform:scaleX(1.048);">does</div>
<div class="t" style="left:538.5px;top:184.1px;font-size:33px;color:#ee7023;transform-origin:0 0;transform:scaleX(1.017);">WHMIS</div>
<div class="t" style="left:665.6px;top:184.1px;font-size:33px;color:#44546a;transform-origin:0 0;transform:scaleX(1.102);">stand</div>
<div class="t" style="left:766.8px;top:184.1px;font-size:33px;color:#44546a;transform-origin:0 0;transform:scaleX(1.043);">for?</div>
<div class="t" style="left:400.9px;top:249.7px;font-size:14px;color:#3f3f3f;transform-origin:0 0;transform:scaleX(0.890);font-weight:bold;font-style:italic">Workplace</div>
<div class="t" style="left:731.1px;top:248.5px;font-size:14px;color:#3f3f3f;transform-origin:0 0;transform:scaleX(0.914);font-weight:bold;font-style:italic">Hazardous Materials</div>
<div class="t" style="left:519.0px;top:423.3px;font-size:14px;color:#3f3f3f;transform-origin:0 0;transform:scaleX(0.895);font-weight:bold;font-style:italic">Information System</div>
<div class="t" style="left:430.7px;top:305.5px;font-size:10.5px;color:#848a3a;transform-origin:0 0;transform:scaleX(0.999);font-style:italic">The quick brown fox</div>
<div class="t" style="left:419.9px;top:318.3px;font-size:10.5px;color:#848a3a;transform-origin:0 0;transform:scaleX(0.999);font-style:italic">jumps over the lazy dog.</div>
<div class="t" style="left:430.7px;top:331.5px;font-size:10.5px;color:#848a3a;transform-origin:0 0;transform:scaleX(0.999);font-style:italic">The quick brown fox</div>
<div class="t" style="left:419.9px;top:344.6px;font-size:10.5px;color:#848a3a;transform-origin:0 0;transform:scaleX(0.999);font-style:italic">jumps over the lazy dog.</div>
<div class="t" style="left:788.4px;top:302.5px;font-size:10.5px;color:#fff;transform-origin:0 0;transform:scaleX(1.001);font-style:italic">The quick brown fox</div>
<div class="t" style="left:777.8px;top:315.6px;font-size:10.5px;color:#fff;transform-origin:0 0;transform:scaleX(0.999);font-style:italic">jumps over the lazy dog.</div>
<div class="t" style="left:788.4px;top:328.8px;font-size:10.5px;color:#fff;transform-origin:0 0;transform:scaleX(1.001);font-style:italic">The quick brown fox</div>
<div class="t" style="left:777.8px;top:341.7px;font-size:10.5px;color:#fff;transform-origin:0 0;transform:scaleX(0.999);font-style:italic">jumps over the lazy dog.</div>
<div class="t" style="left:572.0px;top:481.3px;font-size:10.5px;color:#fff;transform-origin:0 0;transform:scaleX(0.997);font-style:italic">The quick brown fox</div>
<div class="t" style="left:561.2px;top:494.4px;font-size:10.5px;color:#fff;transform-origin:0 0;transform:scaleX(0.997);font-style:italic">jumps over the lazy dog.</div>
<div class="t" style="left:572.0px;top:507.4px;font-size:10.5px;color:#fff;transform-origin:0 0;transform:scaleX(0.997);font-style:italic">The quick brown fox</div>
<div class="t" style="left:561.2px;top:520.3px;font-size:10.5px;color:#fff;transform-origin:0 0;transform:scaleX(0.997);font-style:italic">jumps over the lazy dog.</div>
<div class="frame" style="left:0;top:0;width:1.200px;height:619px"></div>
<div class="frame" style="left:1022.500px;top:0;width:1.500px;height:619px"></div>
<div class="frame" style="left:0;top:617.600px;width:1024px;height:1.400px"></div>
</div>
</body>
</html>
